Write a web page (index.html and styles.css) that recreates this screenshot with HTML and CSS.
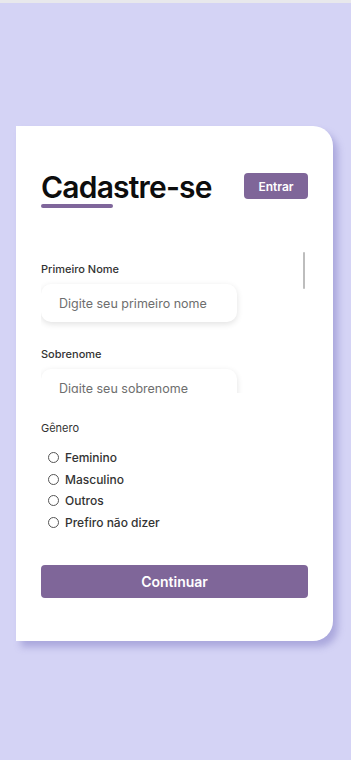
FILE: index.html
```html
<!DOCTYPE html>
<html lang="pt-BR">
<head>
<meta charset="utf-8">
<title>Cadastre-se</title>
<link rel="stylesheet" href="styles.css">
</head>
<body>
<div class="topbar"></div>
<main class="page">
  <section class="card">
    <header class="card-header">
      <div class="title-wrap">
        <h1 class="title">Cadastre-se</h1>
        <div class="title-underline"></div>
      </div>
      <button class="btn-small">Entrar</button>
    </header>

    <div class="fields-wrap">
      <div class="fields">
        <div class="field">
          <label class="field-label">Primeiro Nome</label>
          <input class="field-input" type="text" placeholder="Digite seu primeiro nome">
        </div>
        <div class="field">
          <label class="field-label">Sobrenome</label>
          <input class="field-input" type="text" placeholder="Digite seu sobrenome">
        </div>
      </div>
      <div class="scroll-thumb"></div>
    </div>

    <div class="gender">
      <div class="gender-title">Gênero</div>
      <div class="radio-list">
        <label class="radio-row"><input class="radio" type="radio" name="g"><span>Feminino</span></label>
        <label class="radio-row"><input class="radio" type="radio" name="g"><span>Masculino</span></label>
        <label class="radio-row"><input class="radio" type="radio" name="g"><span>Outros</span></label>
        <label class="radio-row"><input class="radio" type="radio" name="g"><span>Prefiro não dizer</span></label>
      </div>
    </div>

    <button class="btn-main">Continuar</button>
  </section>
</main>
</body>
</html>
```
FILE: styles.css
```css
* { box-sizing: border-box; }
html, body { margin: 0; padding: 0; }
body {
  width: 351px;
  height: 760px;
  background: #d4d3f5;
  font-family: Inter, "Liberation Sans", sans-serif;
  color: #222;
  overflow: hidden;
}
.topbar {
  height: 3px;
  background: #e8e8ec;
}
.page {
  padding: 123px 0 0 16px;
}
.card {
  width: 317px;
  height: 515px;
  background: #fff;
  border-radius: 0 20px 20px 0;
  box-shadow: 5px 6px 7px rgba(110, 105, 185, 0.4);
  padding: 43px 25px 0 25px;
  display: flex;
  flex-direction: column;
}
.card-header {
  display: flex;
  justify-content: space-between;
  align-items: flex-start;
}
.title {
  margin: 0;
  font-size: 30px;
  line-height: 36px;
  font-weight: 600;
  color: #0d0d0d;
  letter-spacing: -0.8px;
}
.title-underline {
  width: 72px;
  height: 4px;
  border-radius: 2px;
  background: #7f669b;
  margin-top: -1px;
}
.btn-small {
  margin-top: 4px;
  width: 64px;
  height: 26px;
  border: 0;
  border-radius: 4px;
  background: #7f6699;
  color: #fff;
  font-family: inherit;
  font-size: 12px;
  font-weight: 600;
  padding: 0;
}
.fields-wrap {
  position: relative;
  margin-top: 44px;
  width: 265px;
  height: 141px;
}
.fields {
  height: 100%;
  overflow: hidden;
  padding: 10px 0 0 0;
  display: flex;
  flex-direction: column;
  gap: 25px;
}
.scroll-thumb {
  position: absolute;
  top: 0;
  right: 1px;
  width: 2px;
  height: 37px;
  background: #bdbdbd;
  border-radius: 1px;
}
.field {
  display: flex;
  flex-direction: column;
  gap: 8px;
  flex-shrink: 0;
}
.field-label {
  font-size: 11px;
  line-height: 14px;
  font-weight: 500;
  color: #333;
}
.field-input {
  width: 196px;
  height: 38px;
  border: 0;
  border-radius: 10px;
  background: #fff;
  box-shadow: 0 2px 6px rgba(0, 0, 0, 0.12);
  padding: 0 0 0 18px;
  font-family: inherit;
  font-size: 12.5px;
  color: #333;
  outline: none;
}
.field-input::placeholder { color: #6e6e6e; }
.gender {
  margin-top: 28px;
}
.gender-title {
  font-size: 11px;
  line-height: 14px;
  color: #333;
}
.radio-list {
  margin-top: 12px;
  padding-left: 7px;
  display: flex;
  flex-direction: column;
}
.radio-row {
  display: flex;
  align-items: center;
  height: 21.5px;
  font-size: 12px;
  font-weight: 500;
  color: #333;
}
.radio {
  appearance: none;
  -webkit-appearance: none;
  width: 11px;
  height: 11px;
  margin: 0 6px 0 0;
  border: 1px solid #555;
  border-radius: 50%;
  background: #fff;
}
.btn-main {
  margin-top: 32px;
  width: 267px;
  height: 33px;
  border: 0;
  border-radius: 4px;
  background: #7f6699;
  color: #fff;
  font-family: inherit;
  font-size: 14px;
  font-weight: 600;
  padding: 0;
}
```
